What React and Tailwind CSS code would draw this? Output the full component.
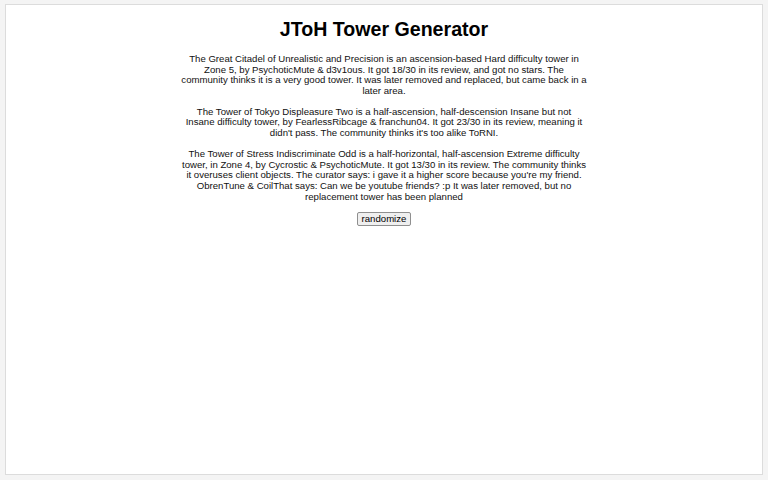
import { useState } from "react";

// Tower blurbs shown on the page; randomize shuffles their order
const TOWERS = [
  "The Great Citadel of Unrealistic and Precision is an ascension-based Hard difficulty tower in Zone 5, by PsychoticMute & d3v1ous. It got 18/30 in its review, and got no stars. The community thinks it is a very good tower. It was later removed and replaced, but came back in a later area.",
  "The Tower of Tokyo Displeasure Two is a half-ascension, half-descension Insane but not\nInsane difficulty tower, by FearlessRibcage & franchun04. It got 23/30 in its review, meaning it didn't pass. The community thinks it's too alike ToRNI.",
  "The Tower of Stress Indiscriminate Odd is a half-horizontal, half-ascension Extreme difficulty tower, in Zone 4, by Cycrostic & PsychoticMute. It got 13/30 in its review. The community thinks it overuses client objects. The curator says: i gave it a higher score because you're my friend. ObrenTune & CoilThat says: Can we be youtube friends? :p It was later removed, but no replacement tower has been planned",
];

export default function App() {
  const [torres, setTorres] = useState(TOWERS);

  const randomize = () => {
    setTorres((prev) => [...prev].sort(() => Math.random() - 0.5));
  };

  return (
    <div className="h-[480px] bg-[#f4f4f4] p-[4px_5px_5px_5px] font-['Liberation_Sans',Arial,sans-serif] text-black">
      <div className="h-full bg-white border border-[#dcdcdc] flex flex-col items-center pt-[14px]">
        <h1 className="text-[19.6px] font-bold leading-[20px]">JToH Tower Generator</h1>

        <div className="w-[406px] mt-[15px] flex flex-col gap-[10.5px]">
          {torres.map((t, i) => (
            <p key={i} className="text-[9.6px] leading-[10.6px] text-center text-[#111] whitespace-pre-line">
              {t}
            </p>
          ))}
        </div>

        <button
          onClick={randomize}
          className="mt-[10px] px-[4px] h-[14px] text-[9.6px] leading-[12px] bg-[#efefef] border border-[#8f8f8f] rounded-[2px]"
        >
          randomize
        </button>
      </div>
    </div>
  );
}
